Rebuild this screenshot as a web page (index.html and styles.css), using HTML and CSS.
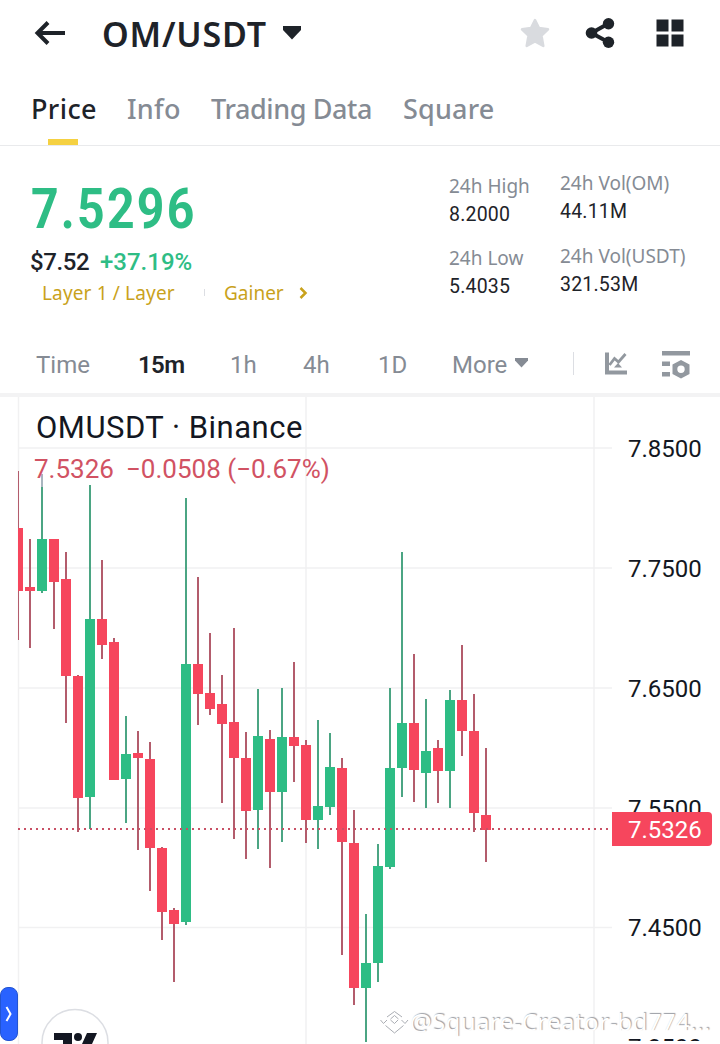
FILE: index.html
```
<!DOCTYPE html>
<html lang="en">
<head>
  <meta charset="UTF-8" />
  <meta name="viewport" content="width=device-width, initial-scale=1.0"/>
  <title>OM/USDT</title>
  <link rel="stylesheet" href="styles.css">
</head>
<body>
  <header class="topbar">
    <svg class="back" width="32" height="26" viewBox="0 0 32 26"><path d="M14 2.5L3.5 13L14 23.5M4 13H31" fill="none" stroke="#1e2329" stroke-width="4"/></svg>
    <h1>OM/USDT</h1>
    <svg class="caret" width="18" height="14" viewBox="0 0 18 14"><path d="M0 0H18V4L9 13.5L0 4Z" fill="#1e2329"/></svg>
    <div class="actions">
      <svg width="30" height="30" viewBox="0 0 30 30"><path d="M15 2L19 10L28 11.3L21.5 17.7L23.3 28L15 23.3L6.7 28L8.5 17.7L2 11.3L11 10Z" fill="#d9dbdf" stroke="#d9dbdf" stroke-width="2.5" stroke-linejoin="round"/></svg>
      <svg class="share" width="30" height="30" viewBox="0 0 30 30"><path d="M23.5 5.5L6.5 15L23.5 24.3" fill="none" stroke="#1e2329" stroke-width="4"/><circle cx="23.5" cy="5.7" r="5.7" fill="#1e2329"/><circle cx="6.5" cy="15" r="5.8" fill="#1e2329"/><circle cx="23.5" cy="24.2" r="5.7" fill="#1e2329"/></svg>
      <svg width="28" height="28" viewBox="0 0 28 28"><path d="M0.5 0.5H12.5V12.5H0.5ZM15.5 0.5H27.5V12.5H15.5ZM0.5 15.5H12.5V27.5H0.5ZM15.5 15.5H27.5V27.5H15.5Z" fill="#1e2329"/></svg>
    </div>
  </header>

  <nav class="tabs">
    <span class="tab active">Price</span>
    <span class="tab info">Info</span>
    <span class="tab trading">Trading Data</span>
    <span class="tab square">Square</span>
  </nav>

  <section class="summary">
    <div class="price-box">
      <div class="price">7.5296</div>
      <div class="change"><span class="usd">$7.52</span><span class="percent">+37.19%</span></div>
      <div class="tags">
        <span class="layer">Layer 1 / Layer</span>
        <i class="tag-line"></i>
        <span class="gainer">Gainer</span>
        <svg width="9" height="12" viewBox="0 0 9 12"><path d="M1.5 1L6.5 6L1.5 11" fill="none" stroke="#c9a21c" stroke-width="2.5"/></svg>
      </div>
    </div>
    <div class="stats">
      <div class="stat"><label>24h High</label><b>8.2000</b></div>
      <div class="stat"><label>24h Low</label><b>5.4035</b></div>
    </div>
    <div class="stats volume">
      <div class="stat"><label>24h Vol(OM)</label><b>44.11M</b></div>
      <div class="stat"><label>24h Vol(USDT)</label><b>321.53M</b></div>
    </div>
  </section>

  <div class="intervals">
    <span class="time">Time</span>
    <span class="m15 selected">15m</span>
    <span class="h1">1h</span>
    <span class="h4">4h</span>
    <span class="d1">1D</span>
    <span class="more">More</span>
    <svg class="more-caret" width="13" height="10" viewBox="0 0 13 10"><path d="M0 0H13V2.5L6.5 9.5L0 2.5Z" fill="#858b94"/></svg>
    <i class="split"></i>
    <svg class="indicator" width="22" height="23" viewBox="0 0 22 23"><path d="M2 0.5V20.5H22" fill="none" stroke="#92989f" stroke-width="4"/><path d="M4.5 13L9.5 6.5L13.5 10L20.5 2" fill="none" stroke="#92989f" stroke-width="2.8"/><path d="M9 15.5L13 11L17 15.5Z" fill="#92989f"/></svg>
    <svg class="settings" width="28" height="29" viewBox="0 0 28 29"><path d="M0 1H28V5.500H0ZM0 11.5H8V16H0ZM0 22H8V26.5H0Z" fill="#92989f"/><path fill-rule="evenodd" d="M19 10L27.5 14.5V24L19 28.500L10.5 24V14.5ZM19 15.500A3.700 3.700 0 1 0 19 22.900A3.700 3.700 0 1 0 19 15.500Z" fill="#92989f"/></svg>
  </div>

  <main class="chart">
    <svg id="candles" width="720" height="647" viewBox="0 397 720 647">
      <clipPath id="axisClip"><rect x="612" y="397" width="108" height="644"/></clipPath>
      <path class="grid" d="M18.5 397V1044M306 397V1044M594 397V1044M18 448H612M18 568H612M18 688H612M18 808H612M18 927.5H612"/>
      <g id="bars"></g>
      <path class="last-line" d="M18 829H609"/>
      <g class="axis" clip-path="url(#axisClip)">
        <text x="628" y="457">7.8500</text>
        <text x="628" y="577">7.7500</text>
        <text x="628" y="697">7.6500</text>
        <text x="628" y="817">7.5500</text>
        <text x="628" y="936">7.4500</text>
        <text x="628" y="1056">7.3500</text>
      </g>
      <path d="M612 812H708Q712 812 712 816V842Q712 846 708 846H612Z" fill="#f6465d"/>
      <text class="last-price" x="628" y="838">7.5326</text>
      <circle cx="75" cy="1042.5" r="33" fill="#fff" stroke="#dcdee3" stroke-width="1.5"/>
      <path d="M54 1033H72V1044H63V1040H54ZM87 1033H97L92 1044H82Z" fill="#131722"/>
      <circle cx="78" cy="1037" r="4" fill="#131722"/>
    </svg>
    <div class="legend">
      <div class="symbol">OMUSDT · Binance</div>
      <div class="quote"><span class="quote-price">7.5326</span><span class="quote-change">−0.0508 (−0.67%)</span></div>
    </div>
    <div class="drawer"><svg width="8" height="16" viewBox="0 0 8 16"><path d="M1.5 1L5.5 8L1.5 15" fill="none" stroke="#fff" stroke-width="2"/></svg></div>
    <div class="watermark">
      <svg width="30" height="28" viewBox="0 0 30 28"><path d="M4 10L14.5 2L25 10L28 13L24.500 17L14.500 26L4.500 17L1 13Z" fill="#fff" fill-opacity="0.7"/><path d="M7 10L14.5 4.500L22 10M10.500 12L14.500 8.500L18.500 12M0.500 13L3.500 16.500L7 13M10.500 13L14.500 16.500L18 13M21.500 13L25 16.500L28 13M5.500 18.500L14.500 26L23.500 18.500" fill="none" stroke="#aaadb3" stroke-width="1"/></svg>
      <span>@Square-Creator-bd774...</span>
    </div>
  </main>

  <script>
    // high, body top, body bottom, low, up
    const candles = [
      [471, 528, 591, 640, 0], [539, 587, 591, 648, 0], [487, 539, 591, 593, 1],
      [539, 539, 582, 629, 0], [552, 579, 676, 723, 0], [675, 676, 798, 832, 0],
      [485, 619, 797, 829, 1], [560, 619, 645, 659, 0], [638, 642, 780, 780, 0],
      [716, 754, 779, 823, 1], [731, 753, 758, 850, 0], [742, 759, 848, 891, 0],
      [847, 848, 912, 940, 0], [908, 910, 924, 982, 0], [498, 664, 922, 925, 1],
      [577, 664, 694, 725, 0], [633, 693, 709, 715, 0], [675, 704, 724, 803, 0],
      [628, 722, 758, 839, 0], [732, 758, 811, 859, 0], [689, 736, 810, 849, 1],
      [730, 739, 792, 868, 0], [688, 737, 792, 842, 1], [662, 737, 746, 782, 0],
      [740, 745, 820, 843, 0], [720, 806, 820, 849, 1], [733, 767, 807, 815, 1],
      [758, 768, 842, 955, 0], [810, 843, 988, 1005, 0], [914, 963, 988, 1042, 1],
      [844, 866, 963, 982, 1], [688, 768, 867, 869, 1], [552, 723, 768, 797, 1],
      [654, 723, 770, 802, 0], [699, 751, 773, 808, 1], [740, 748, 771, 803, 0],
      [690, 700, 771, 808, 1], [645, 700, 731, 756, 0], [694, 731, 813, 832, 0],
      [748, 815, 830, 862, 0]
    ];

    const bars = document.getElementById('bars');

    function addRect(x, y, width, height, name) {
      const rect = document.createElementNS('http://www.w3.org/2000/svg', 'rect');
      // the first candle is cut off by the left edge of the pane
      const left = Math.max(x, 18);
      rect.setAttribute('x', left);
      rect.setAttribute('y', y);
      rect.setAttribute('width', width - (left - x));
      rect.setAttribute('height', height);
      rect.setAttribute('class', name);
      bars.appendChild(rect);
    }

    // faded tip of the third candle, behind the legend
    addRect(41, 474, 2, 13, 'wick-faded');

    candles.forEach(([high, top, bottom, low, up], i) => {
      const x = 18 + i * 12;
      const side = up ? 'up' : 'down';
      addRect(x - 1, high, 2, low - high, 'wick-' + side);
      addRect(x - 5, top, 10, bottom - top, 'body-' + side);
    });
  </script>
</body>
</html>
```
FILE: styles.css
```
* {
  margin: 0;
  padding: 0;
  box-sizing: border-box;
}
body {
  width: 720px;
  height: 1044px;
  overflow: hidden;
  background: #fff;
  color: #1e2329;
  font-family: Roboto, 'Liberation Sans', sans-serif;
}
svg {
  display: block;
  flex-shrink: 0;
}
span, h1, label, b {
  white-space: nowrap;
}
.topbar {
  display: flex;
  align-items: center;
  height: 68px;
  padding: 0 36px 0 34px;
}
.topbar h1 {
  width: 181px;
  margin-left: 36px;
  font-family: 'Noto Sans', sans-serif;
  font-size: 34px;
  font-weight: 600;
  letter-spacing: 0.8px;
  line-height: 70px;
}
.topbar .back {
  margin-top: -2px;
}
.topbar .caret {
  margin-top: -2px;
}
.actions {
  display: flex;
  align-items: center;
  gap: 35px;
  margin: -2px 0 0 auto;
}
.share {
  margin-right: 6px;
}
.tabs {
  display: flex;
  height: 78px;
  padding-left: 31px;
  border-bottom: 1px solid #e9eaec;
  font-family: 'Noto Sans', sans-serif;
  font-size: 27px;
  font-weight: 500;
  line-height: 82px;
  color: #858b94;
}
.tab.active {
  position: relative;
  width: 96px;
  letter-spacing: 0.4px;
  color: #1e2329;
}
.tab.active::after {
  content: '';
  position: absolute;
  left: 17px;
  bottom: 0;
  width: 30px;
  height: 6px;
  background: #f5d142;
}
.info {
  width: 84px;
  letter-spacing: 0.3px;
}
.trading {
  width: 192px;
  letter-spacing: -0.4px;
}
.square {
  letter-spacing: 0.2px;
}
/* Price and 24h stats */
.summary {
  display: flex;
  height: 190px;
}
.price-box {
  width: 449px;
  padding: 30px 0 0 31px;
}
.price {
  height: 70px;
  font-size: 56px;
  font-weight: 700;
  letter-spacing: 2.6px;
  line-height: 67px;
  color: #2ebd85;
  transform: scaleX(0.86);
  transform-origin: left;
}
.change {
  display: flex;
  height: 33px;
  font-size: 24px;
  font-weight: 500;
  line-height: 33px;
}
.usd {
  width: 69px;
  margin-left: -1px;
  margin-right: 1px;
  letter-spacing: -0.4px;
}
.percent {
  color: #2ebd85;
}
.tags {
  display: flex;
  align-items: center;
  height: 27px;
  padding-left: 11px;
  font-family: 'Noto Sans', sans-serif;
  font-size: 19px;
  color: #c9a21c;
}
.layer {
  width: 162px;
  letter-spacing: 0.15px;
}
.tag-line {
  width: 1px;
  height: 7px;
  background: #dcdee3;
}
.gainer {
  width: 75px;
  margin-left: 19px;
}
.stats {
  width: 111px;
  padding-top: 26px;
}
.stats.volume {
  width: 150px;
  padding-top: 23px;
}
.stat {
  display: flex;
  flex-direction: column;
  height: 72px;
}
.volume .stat {
  height: 73px;
}
.stat label {
  font-family: 'Noto Sans', sans-serif;
  font-size: 19px;
  line-height: 28px;
  color: #858b94;
}
.stat b {
  font-size: 19.5px;
  font-weight: 400;
  letter-spacing: 0.2px;
  line-height: 29px;
}
/* Interval bar */
.intervals {
  display: flex;
  align-items: center;
  height: 61px;
  padding-left: 36px;
  border-bottom: 4px solid #f3f3f4;
  font-size: 24px;
  color: #858b94;
}
.time {
  width: 102px;
}
.m15 {
  width: 92px;
  letter-spacing: -0.6px;
}
.selected {
  font-weight: 600;
  color: #1e2329;
}
.h1 {
  width: 73px;
}
.h4 {
  width: 75px;
}
.d1 {
  width: 74px;
}
.more {
  width: 63px;
}
.more-caret {
  margin-top: -3px;
}
.split {
  width: 1px;
  height: 23px;
  margin: -2px 31px 0 45px;
  background: #dcdee3;
}
.indicator {
  margin-top: -2px;
}
.settings {
  margin-left: 35px;
  margin-top: -1px;
}
/* Chart */
.chart {
  position: relative;
  height: 647px;
}
.grid {
  fill: none;
  stroke: #f1f1f2;
  stroke-width: 1.5;
}
.wick-faded {
  fill: #a9b5bf;
}
.wick-up {
  fill: #4ba583;
}
.wick-down {
  fill: #b35c6c;
}
.body-up {
  fill: #2ebd85;
}
.body-down {
  fill: #f6465d;
}
.last-line {
  stroke: #c85065;
  stroke-width: 2;
  stroke-dasharray: 2 4;
}
.axis text,
.last-price {
  font-size: 24px;
  fill: #131722;
}
.last-price {
  fill: #fff;
}
.legend {
  position: absolute;
  top: 10px;
  left: 34px;
}
.symbol {
  padding-left: 2px;
  font-size: 31px;
  letter-spacing: 0.5px;
  line-height: 42px;
  color: #131722;
}
.quote {
  display: flex;
  font-size: 26px;
  line-height: 41px;
  color: #d15263;
}
.quote-price {
  width: 92px;
}
.drawer {
  position: absolute;
  left: 0;
  top: 590px;
  display: flex;
  align-items: center;
  justify-content: center;
  width: 18px;
  height: 54px;
  border: 1px solid #2254d1;
  border-radius: 8px;
  background: #2962ff;
}
.watermark {
  position: absolute;
  left: 380px;
  top: 608px;
  display: flex;
  align-items: center;
  font-family: 'Noto Sans', sans-serif;
  font-size: 24px;
  letter-spacing: 0.4px;
  line-height: 34px;
  color: #fff;
  text-shadow: 1px -1px 1px #9b9ea5;
}
.watermark svg {
  margin-top: -2px;
}
```
